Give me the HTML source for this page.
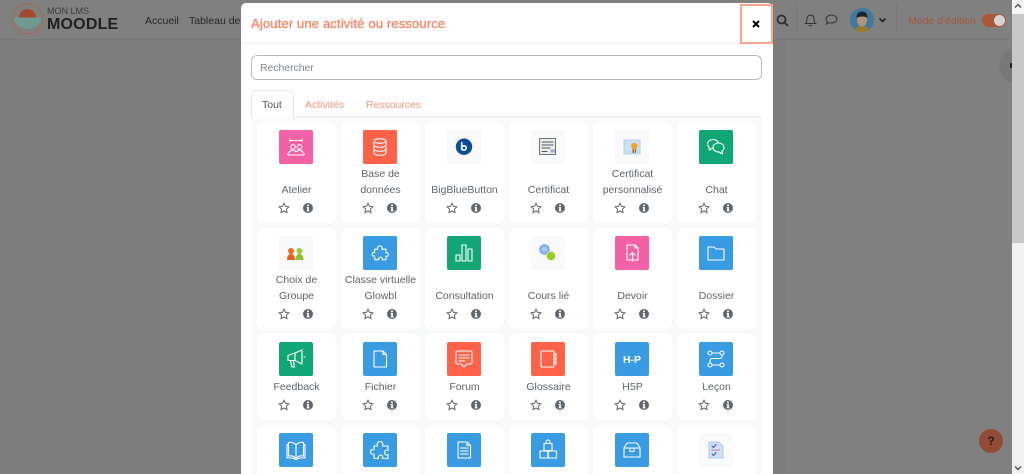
<!DOCTYPE html>
<html lang="fr"><head><meta charset="utf-8"><title>Ajouter une activité ou ressource</title>
<style>
*{box-sizing:border-box}
html,body{margin:0;padding:0;width:1024px;height:474px;overflow:hidden;background:#7d7d7d;font-family:"Liberation Sans",sans-serif}
#w{position:relative;width:1024px;height:474px;overflow:hidden}
.a{position:absolute}
.t{position:absolute;white-space:nowrap;line-height:14px}
.card{position:absolute;width:79px;background:#fff;border-radius:7px}
.ic{position:absolute;left:22px;top:8px;width:34px;height:34px;border-radius:2px;background:#f8f9fa}
.ic svg{display:block;width:34px;height:34px;fill:none;stroke:#fff;stroke-width:1.1;stroke-linecap:round;stroke-linejoin:round}
.pink{background:#f161a4}.red{background:#fe634a}.blue{background:#399be2}.green{background:#11a676}
.l{position:absolute;left:0;width:79px;margin-top:2px;text-align:center;font-size:10.5px;line-height:15.5px;color:#5c6369;white-space:nowrap}
.s{position:absolute;width:12px;height:12px;left:21px;bottom:9px}
.i{position:absolute;width:12px;height:12px;left:45px;bottom:9px}
.r4{height:48px;border-radius:7px 7px 0 0}
</style></head><body><div id="w">
<svg width="0" height="0" style="position:absolute"><defs>
<symbol id="star" viewBox="0 0 12 12"><path d="M6 1.2l1.5 3.1 3.4.5-2.5 2.4.6 3.4L6 9l-3 1.6.6-3.4L1.1 4.8l3.4-.5z" fill="none" stroke="#5f666c" stroke-width="1"/></symbol>
<symbol id="info" viewBox="0 0 12 12"><circle cx="6" cy="6" r="5" fill="#5f666c"/><rect x="5.1" y="2.5" width="1.8" height="1.7" fill="#fff"/><path d="M4.6 5.1H6.9V8.4H7.6V9.4H4.6V8.4H5.2V6.1H4.6z" fill="#fff"/></symbol>
</defs></svg>

<!-- page behind backdrop -->
<div class="a" style="left:0;top:0;width:1012px;height:40px;background:#808080;border-bottom:1px solid #797979"></div>
<div class="a" style="left:786px;top:40px;width:226px;height:434px;background:#808080"></div>
<svg class="a" style="left:11px;top:3px" width="34" height="33" viewBox="0 0 34 33"><circle cx="16.500" cy="16" r="15" fill="#808080" stroke="#a56a52" stroke-width="1"/><path d="M2.300 14.500H30.700A14.500 14.500 0 0 1 2.300 14.500z" fill="#6f9a92"/><path d="M8 14.500A8.500 8.500 0 0 1 25 14.500z" fill="#a3492f"/></svg>
<div class="t" style="left:47px;top:4px;font-size:9px;color:#3d3d3d">MON LMS</div>
<div class="t" style="left:47px;top:18px;font-size:16px;font-weight:bold;color:#202020;letter-spacing:.2px">MOODLE</div>
<div class="t" style="left:145px;top:14px;font-size:10.5px;color:#262626">Accueil</div>
<div class="t" style="left:189px;top:14px;font-size:10.5px;color:#262626">Tableau de</div>
<svg class="a" style="left:775px;top:13px" width="15" height="15" viewBox="0 0 15 15" fill="none" stroke="#2e2e2e" stroke-width="1.800"><circle cx="6.500" cy="6.500" r="4"/><path d="M9.500 9.500L13 13"/></svg>
<div class="a" style="left:796px;top:4px;width:1px;height:30px;background:#777"></div>
<svg class="a" style="left:804px;top:13px" width="13" height="14" viewBox="0 0 13 14" fill="none" stroke="#333" stroke-width="1"><path d="M1.500 10.500C3 9.500 3 7.500 3 5.500a3.500 3.500 0 0 1 7 0c0 2 0 4 1.500 5zM5 12a1.700 1.700 0 0 0 3 0"/></svg>
<svg class="a" style="left:825px;top:14px" width="13" height="12" viewBox="0 0 13 12" fill="none" stroke="#333" stroke-width="1"><path d="M6.500 1C3.500 1 1 2.800 1 5c0 1 .5 1.800 1.300 2.500L1.500 10l2.700-1.300c.7.200 1.500.3 2.300.3 3 0 5.500-1.800 5.500-4S9.500 1 6.500 1z"/></svg>
<svg class="a" style="left:850px;top:8px" width="24" height="24" viewBox="0 0 24 24"><circle cx="12" cy="12" r="12" fill="#3f7b9f"/><path d="M5 22c1-3 4-4 7-4s6 1 7 4a12 12 0 0 1-14 0z" fill="#9a7a2c"/><ellipse cx="12" cy="12" rx="5" ry="6.500" fill="#b5907d"/><path d="M6.500 10C6.500 5 9 3.500 12 3.500S17.500 5 17.500 10C15.500 8 9 8 6.500 10z" fill="#1f2426"/></svg>
<svg class="a" style="left:878px;top:17px" width="9" height="7" viewBox="0 0 9 7" fill="none" stroke="#222" stroke-width="1.600"><path d="M1.500 1.500L4.500 4.500 7.500 1.500"/></svg>
<div class="a" style="left:896px;top:4px;width:1px;height:30px;background:#777"></div>
<div class="t" style="left:908px;top:14px;font-size:10.5px;color:#a5563e">Mode d'édition</div>
<div class="a" style="left:982px;top:14px;width:24px;height:13px;border-radius:7px;background:#ab5637"></div>
<div class="a" style="left:994px;top:15px;width:11px;height:11px;border-radius:50%;background:#d4d4d4"></div>
<div class="a" style="left:999px;top:47px;width:40px;height:37px;border-radius:50%;background:#787878"></div>
<div class="a" style="left:1010px;top:63px;width:3px;height:5px;background:#1d1d1d;border-radius:2px"></div>
<div class="a" style="left:979px;top:429px;width:24px;height:24px;border-radius:50%;background:#934b35;color:#1d1d1d;font:bold 12px/24px 'Liberation Sans',sans-serif;text-align:center">?</div>

<!-- scrollbar -->
<div class="a" style="left:1012px;top:0;width:12px;height:474px;background:#f1f1f1"></div>
<div class="a" style="left:1012px;top:14px;width:12px;height:229px;background:#c8c8c8"></div>
<div class="a" style="left:1012px;top:0;width:12px;height:14px;background:#f6f6f6"></div>
<svg class="a" style="left:1014px;top:3px" width="8" height="6" viewBox="0 0 8 6" fill="none" stroke="#505050" stroke-width="1.400"><path d="M1 4.500L4 1.500 7 4.500"/></svg>
<svg class="a" style="left:1014px;top:465px" width="8" height="6" viewBox="0 0 8 6" fill="none" stroke="#505050" stroke-width="1.400"><path d="M1 1.500L4 4.500 7 1.500"/></svg>

<!-- modal -->
<div class="a" style="left:241px;top:3px;width:532px;height:471px;background:#fff;border-radius:5px 5px 0 0"></div>
<div class="a" style="left:241px;top:43px;width:532px;height:1px;background:#eceef0"></div>
<div class="t" style="left:251px;top:17px;font-size:13px;color:#ff8163;letter-spacing:.15px;-webkit-text-stroke:.3px #ff8163">Ajouter une activité ou ressource</div>
<div class="a" style="left:740px;top:4px;width:33px;height:40px;border:2px solid #ffa28c;background:#fff"></div>
<svg class="a" style="left:752px;top:20px" width="8" height="8" viewBox="0 0 8 8" stroke="#000" stroke-width="2"><path d="M1 1L7 7M7 1L1 7"/></svg>
<div class="a" style="left:251px;top:55px;width:511px;height:25px;border:1px solid #b7bbbf;border-radius:6px;background:#fff"></div>
<div class="t" style="left:260px;top:61px;font-size:10.5px;letter-spacing:-.05px;color:#7e858b">Rechercher</div>
<div class="a" style="left:252px;top:116px;width:510px;height:358px;background:#f8f9fa;border-top:1px solid #e6e8ea"></div>
<div class="a" style="left:251px;top:90px;width:43px;height:28px;border:1px solid #e3e5e8;border-bottom:none;border-radius:5px 5px 0 0;background:#fff"></div>
<div class="t" style="left:262px;top:98px;font-size:10.500px;color:#50575d">Tout</div>
<div class="t" style="left:305px;top:98px;font-size:10.500px;color:#ff9275">Activités</div>
<div class="t" style="left:366px;top:98px;font-size:10.500px;letter-spacing:-.05px;color:#ff9275">Ressources</div>

<!-- row 1 -->
<div class="card" style="left:257px;top:122px;height:101px"><div class="ic pink"><svg viewBox="0 0 34 34"><path d="M11 10.500H23M11 9v3M23 9v3"/><circle cx="14" cy="17" r="2.300"/><circle cx="20.500" cy="17" r="2.300"/><path d="M9 25c0-3 2-4.500 5-4.500 1.500 0 2.500.5 3 1.200.6-.7 1.600-1.200 3.200-1.200 3 0 4.800 1.500 4.800 4.500z"/></svg></div><div class="l" style="top:59px">Atelier</div><svg class="s"><use href="#star"/></svg><svg class="i"><use href="#info"/></svg></div>
<div class="card" style="left:341px;top:122px;height:101px"><div class="ic red"><svg viewBox="0 0 34 34"><ellipse cx="17" cy="11" rx="6" ry="2.300"/><path d="M11 11V23c0 1.300 2.700 2.300 6 2.300s6-1 6-2.300V11M11 15c0 1.300 2.700 2.300 6 2.300s6-1 6-2.300M11 19c0 1.300 2.700 2.300 6 2.300s6-1 6-2.300"/></svg></div><div class="l" style="top:43px">Base de<br>données</div><svg class="s"><use href="#star"/></svg><svg class="i"><use href="#info"/></svg></div>
<div class="card" style="left:425px;top:122px;height:101px"><div class="ic"><svg viewBox="0 0 34 34"><circle cx="17" cy="16.700" r="8.200" fill="#0c4a9c" stroke="none"/><path d="M14.700 12.500V19.500" stroke-width="1.600"/><circle cx="17" cy="18" r="2.200" stroke-width="1.600"/></svg></div><div class="l" style="top:59px">BigBlueButton</div><svg class="s"><use href="#star"/></svg><svg class="i"><use href="#info"/></svg></div>
<div class="card" style="left:509px;top:122px;height:101px"><div class="ic"><svg viewBox="0 0 34 34"><rect x="8.500" y="8.500" width="16" height="16" fill="#eceded" stroke="#6d7174" stroke-width="1"/><path d="M11 12H22M11 15H22M11 18H19M11 21.500H16" stroke="#555" stroke-width="1"/><rect x="19.500" y="19.500" width="4.500" height="3" fill="#a9a8dd" stroke="none"/></svg></div><div class="l" style="top:59px">Certificat</div><svg class="s"><use href="#star"/></svg><svg class="i"><use href="#info"/></svg></div>
<div class="card" style="left:593px;top:122px;height:101px"><div class="ic"><svg viewBox="0 0 34 34"><rect x="9" y="10" width="16" height="14" fill="#c9e0f8" stroke="#a9c8ea" stroke-width=".8"/><circle cx="19.300" cy="16" r="3.200" fill="#f0a321" stroke="none"/><path d="M17.500 18.500V23H19V19.500M19.800 19.500V23H21.200V18.500" fill="#a8641c" stroke="none"/></svg></div><div class="l" style="top:43px">Certificat<br>personnalisé</div><svg class="s"><use href="#star"/></svg><svg class="i"><use href="#info"/></svg></div>
<div class="card" style="left:677px;top:122px;height:101px"><div class="ic green"><svg viewBox="0 0 34 34"><path d="M14 9.500c-3 0-5.500 2-5.500 4.500 0 1.500.8 2.700 2 3.500L10 20l3-1.500"/><path d="M14 9.500c3 0 5 1.700 5.300 3.500"/><path d="M19.500 13c3 0 5.500 2 5.500 4.500 0 1.500-.8 2.700-2 3.500l.5 3-3.500-2c-3.500 0-6-2-6-4.500S16.500 13 19.500 13z"/></svg></div><div class="l" style="top:59px">Chat</div><svg class="s"><use href="#star"/></svg><svg class="i"><use href="#info"/></svg></div>

<!-- row 2 -->
<div class="card" style="left:257px;top:228px;height:101px"><div class="ic"><svg viewBox="0 0 34 34"><circle cx="12" cy="15" r="3" fill="#ef6a1f" stroke="none"/><path d="M8 24c0-4 1.500-6 4-6s4 2 4 6z" fill="#e8601a" stroke="none"/><circle cx="20.500" cy="15" r="3" fill="#9cc93c" stroke="none"/><path d="M16.500 24c0-4 1.500-6 4-6s4 2 4 6z" fill="#8fc02f" stroke="none"/></svg></div><div class="l" style="top:43px">Choix de<br>Groupe</div><svg class="s"><use href="#star"/></svg><svg class="i"><use href="#info"/></svg></div>
<div class="card" style="left:341px;top:228px;height:101px"><div class="ic blue"><svg viewBox="0 0 34 34"><g transform="translate(4.200 4.200) scale(.75)" stroke-width="1.400"><path d="M14 12c-1-3 1-4.500 3-4.500s3.500 1.500 2.500 4.500H25v5c2.500-1 3.500.8 3 2.500-.4 1.700-1.500 2.500-3 1.800V26H20c.8-2.500-1-3.500-2.500-3.300-1.500.2-2.700 1.200-2 3.300H10V21c-2.500.8-3.700-.8-3.500-2.500s1.500-3 3.500-2V12z"/></g></svg></div><div class="l" style="top:43px">Classe virtuelle<br>Glowbl</div><svg class="s"><use href="#star"/></svg><svg class="i"><use href="#info"/></svg></div>
<div class="card" style="left:425px;top:228px;height:101px"><div class="ic green"><svg viewBox="0 0 34 34"><rect x="9" y="19" width="4" height="6"/><rect x="15" y="9" width="4" height="16"/><rect x="21" y="13" width="4" height="12"/></svg></div><div class="l" style="top:59px">Consultation</div><svg class="s"><use href="#star"/></svg><svg class="i"><use href="#info"/></svg></div>
<div class="card" style="left:509px;top:228px;height:101px"><div class="ic"><svg viewBox="0 0 34 34"><circle cx="13.500" cy="13.500" r="5.300" fill="#7ea9ee" stroke="none"/><circle cx="13.500" cy="13.500" r="3" fill="#a9c7f5" stroke="none"/><circle cx="20" cy="20" r="4.500" fill="#9ccc1c" stroke="#dff0b5" stroke-width=".8"/></svg></div><div class="l" style="top:59px">Cours lié</div><svg class="s"><use href="#star"/></svg><svg class="i"><use href="#info"/></svg></div>
<div class="card" style="left:593px;top:228px;height:101px"><div class="ic pink"><svg viewBox="0 0 34 34"><path d="M12 9H20L23 12V24H12z"/><path d="M20 9V12H23"/><path d="M17.500 25V16.500M15 19L17.500 16.500 20 19"/></svg></div><div class="l" style="top:59px">Devoir</div><svg class="s"><use href="#star"/></svg><svg class="i"><use href="#info"/></svg></div>
<div class="card" style="left:677px;top:228px;height:101px"><div class="ic blue"><svg viewBox="0 0 34 34"><path d="M9 11H15L17 13H25V24H9z"/></svg></div><div class="l" style="top:59px">Dossier</div><svg class="s"><use href="#star"/></svg><svg class="i"><use href="#info"/></svg></div>

<!-- row 3 -->
<div class="card" style="left:257px;top:334px;height:86px"><div class="ic green"><svg viewBox="0 0 34 34"><path d="M9 13.500L16 11 23 8V22L16 18.500H9z"/><path d="M16 11V18.500M25 15H26"/><path d="M11.500 19L13 25H15.500L14.500 19.500"/></svg></div><div class="l" style="top:44px">Feedback</div><svg class="s"><use href="#star"/></svg><svg class="i"><use href="#info"/></svg></div>
<div class="card" style="left:341px;top:334px;height:86px"><div class="ic blue"><svg viewBox="0 0 34 34"><path d="M11 9H20L23.500 12.500V25H11z"/><path d="M20 9V12.500H23.500"/></svg></div><div class="l" style="top:44px">Fichier</div><svg class="s"><use href="#star"/></svg><svg class="i"><use href="#info"/></svg></div>
<div class="card" style="left:425px;top:334px;height:86px"><div class="ic red"><svg viewBox="0 0 34 34"><path d="M10.500 9H23.500A1.500 1.500 0 0 1 25 10.500V20.500A1.500 1.500 0 0 1 23.500 22H20L17 25 14 22H10.500A1.500 1.500 0 0 1 9 20.500V10.500A1.500 1.500 0 0 1 10.500 9z"/><path d="M12 13H22M12 16H22M12 19H18"/></svg></div><div class="l" style="top:44px">Forum</div><svg class="s"><use href="#star"/></svg><svg class="i"><use href="#info"/></svg></div>
<div class="card" style="left:509px;top:334px;height:86px"><div class="ic red"><svg viewBox="0 0 34 34"><rect x="10" y="9" width="13" height="16" rx="1"/><path d="M23 11.500H25V14H23M23 15.500H25V18H23M23 19.500H25V22H23"/></svg></div><div class="l" style="top:44px">Glossaire</div><svg class="s"><use href="#star"/></svg><svg class="i"><use href="#info"/></svg></div>
<div class="card" style="left:593px;top:334px;height:86px"><div class="ic blue"><svg viewBox="0 0 34 34"><text x="17" y="21" text-anchor="middle" font-family="Liberation Sans,sans-serif" font-size="10.500" font-weight="bold" fill="#fff" stroke="none">H-P</text></svg></div><div class="l" style="top:44px">H5P</div><svg class="s"><use href="#star"/></svg><svg class="i"><use href="#info"/></svg></div>
<div class="card" style="left:677px;top:334px;height:86px"><div class="ic blue"><svg viewBox="0 0 34 34"><circle cx="11" cy="11" r="2"/><circle cx="23" cy="11" r="2"/><circle cx="11" cy="23" r="2"/><circle cx="23" cy="23" r="2"/><path d="M13 11H21M23 13V14.500A2 2 0 0 1 21 16.500H13A2 2 0 0 0 11 18.500V21M13 23H21"/></svg></div><div class="l" style="top:44px">Leçon</div><svg class="s"><use href="#star"/></svg><svg class="i"><use href="#info"/></svg></div>

<!-- row 4 -->
<div class="card r4" style="left:257px;top:426px"><div class="ic blue" style="top:7px"><svg viewBox="0 0 34 34"><path d="M17 12C15 9.500 12 9 9.500 9.500V23C12 22.500 15 23 17 25.500 19 23 22 22.500 24.500 23V9.500C22 9 19 9.500 17 12zM17 12V25.500"/><path d="M9.500 11.500H8V25C11 24.500 14.500 25 17 26.500 19.500 25 23 24.500 26 25V11.500H24.500"/></svg></div></div>
<div class="card r4" style="left:341px;top:426px"><div class="ic blue" style="top:7px"><svg viewBox="0 0 34 34"><path d="M14.500 13c-1-3 .5-4.500 2.500-4.500s3.500 1.500 2.500 4.500H25v4.500c-2.300-.8-3.500.5-3.500 2s1.200 3 3.500 2V25.500H19.500c.8-2.300-.7-3.500-2-3.500s-2.500 1.200-2 3.500H11V21c-2.300.8-3.700-.5-3.500-2.200S9 16 11 17V13z"/></svg></div></div>
<div class="card r4" style="left:425px;top:426px"><div class="ic blue" style="top:7px"><svg viewBox="0 0 34 34"><path d="M11 9H20L23.500 12.500V25H11z"/><path d="M20 9V12.500H23.500M13.500 15H21M13.500 18H21M13.500 21H21"/></svg></div></div>
<div class="card r4" style="left:509px;top:426px"><div class="ic blue" style="top:7px"><svg viewBox="0 0 34 34"><rect x="13" y="10.500" width="8" height="7"/><path d="M15 10.500V9a2 2 0 0 1 4 0v1.500"/><rect x="9" y="18" width="8" height="7"/><rect x="17.500" y="18" width="8" height="7"/></svg></div></div>
<div class="card r4" style="left:593px;top:426px"><div class="ic blue" style="top:7px"><svg viewBox="0 0 34 34"><path d="M12 10H22L25 15V24H9V15zM9 15H25M15 15V18.500H19V15"/></svg></div></div>
<div class="card r4" style="left:677px;top:426px"><div class="ic" style="top:7px"><svg viewBox="0 0 34 34"><path d="M10 9H20L24 13V25H10z" fill="#cfe0f8" stroke="#a9c1ea" stroke-width=".8"/><path d="M13 13L14.500 14.500 17 11.500M13 21L14.500 22.500 17 19.500" stroke="#3e55c4" stroke-width="1"/><path d="M13 17H22" stroke="#d0607a" stroke-width="1" stroke-dasharray="1.500 1.500"/></svg></div></div>
</div></body></html>
